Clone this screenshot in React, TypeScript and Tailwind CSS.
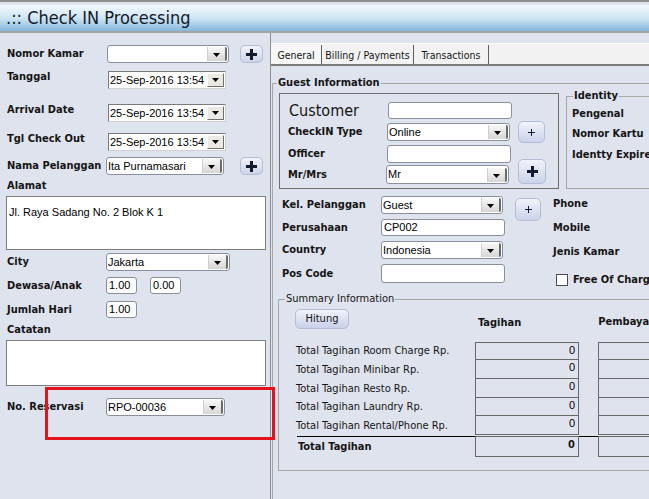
import React from "react";

const LBL = "font-bold text-[11px] leading-[14px] text-[#151515] whitespace-nowrap";
const INP = "font-['Liberation_Sans',Arial,sans-serif] text-[11px] leading-[13px] text-black whitespace-nowrap";

function Tri() {
  return (
    <svg width="7" height="4" viewBox="0 0 7 4">
      <path d="M0 0H7L3.5 4Z" fill="#000" />
    </svg>
  );
}

function Combo({ cls, value }: { cls: string; value?: string }) {
  return (
    <div className={`${cls} flex items-center bg-white border border-[#8a8f9e] rounded-[3px] pl-[1px] pr-[1px]`}>
      <span className={`${INP} flex-1 overflow-hidden`}>{value}</span>
      <div className="w-[20px] h-[14px] flex items-end justify-center pb-[4px] bg-linear-to-b from-[#f8f8f8] to-[#d6d6d6] border-l border-[#cfcfcf] border-r-2 border-r-[#6a6a6a] rounded-r-[2px]">
        <Tri />
      </div>
    </div>
  );
}

function DatePick({ cls }: { cls: string }) {
  return (
    <div className={`${cls} w-[118px] h-[18px] flex items-center bg-white border border-[#7a7a7a] border-r-[#d0d0d0] border-b-[#d0d0d0] pl-[1px] pr-[1px]`}>
      <span className={`${INP} flex-1`}>25-Sep-2016 13:54</span>
      <div className="w-[17px] h-[14px] flex items-center justify-center bg-[#ece9e4] border border-white border-r-[#707070] border-b-[#707070]">
        <Tri />
      </div>
    </div>
  );
}

function TextBox({ cls, value, right }: { cls: string; value?: string; right?: boolean }) {
  return (
    <div className={`${cls} flex items-center bg-white border border-[#8a8f9e] rounded-[3px] px-[2px] ${right ? "justify-end" : ""}`}>
      <span className={INP}>{value}</span>
    </div>
  );
}

function Plus({ cls, big }: { cls: string; big?: boolean }) {
  return (
    <div className={`${cls} flex items-center justify-center rounded-[5px] border border-[#b4bcd6] bg-linear-to-b from-[#f1f3fb] to-[#cbd3ea]`}>
      {big ? (
        <svg width="11" height="11" viewBox="0 0 11 11">
          <path d="M4 0h3v4h4v3H7v4H4V7H0V4h4z" fill="#141a30" />
        </svg>
      ) : (
        <svg width="7" height="7" viewBox="0 0 7 7">
          <path d="M3 0h1v3h3v1H4v3H3V4H0V3h3z" fill="#141a30" />
        </svg>
      )}
    </div>
  );
}

const rows = [
  { label: "Total Tagihan Room Charge Rp.", h: "h-[18px]" },
  { label: "Total Tagihan Minibar Rp.", h: "h-[19px]" },
  { label: "Total Tagihan Resto Rp.", h: "h-[19px]" },
  { label: "Total Tagihan Laundry Rp.", h: "h-[18px]" },
  { label: "Total Tagihan Rental/Phone Rp.", h: "h-[19px]" },
];

export default function App() {
  return (
    <div className="relative w-[649px] h-[499px] overflow-hidden bg-[#dfe3ee] font-['DejaVu_Sans_Condensed','DejaVu_Sans',sans-serif] text-[#151515]">
      {/* Title */}
      <div className="border-t-2 border-[#8d8d8d] pt-[3px] border-b-2 border-b-[#a4a4a4]">
        <div className="h-[26px] flex items-center pl-[6px] bg-linear-to-b from-[#f4f9fd] via-[#cfe5f3] to-[#83b8dc]">
          <span className="text-[18px] leading-[22px] text-[#141a28] whitespace-nowrap">.:: Check IN Processing</span>
        </div>
      </div>

      <div className="flex">
        {/* Left panel */}
        <div className="w-[271px] h-[466px] shrink-0 border-r border-[#8e8e8e] flex flex-col">
          <div className="flex items-center h-[18px] mt-[12px]">
            <span className={`${LBL} w-[107px] pl-[7px]`}>Nomor Kamar</span>
            <Combo cls="w-[122px] h-[18px]" />
            <Plus cls="ml-[11px] w-[23px] h-[18px]" big />
          </div>
          <div className="flex items-start h-[18px] mt-[8px]">
            <span className={`${LBL} w-[107px] pl-[7px] mt-[-1px]`}>Tanggal</span>
            <DatePick cls="ml-[1px]" />
          </div>
          <div className="flex items-start h-[18px] mt-[15px]">
            <span className={`${LBL} w-[107px] pl-[7px] mt-[-1px]`}>Arrival Date</span>
            <DatePick cls="ml-[1px]" />
          </div>
          <div className="flex items-start h-[18px] mt-[11px]">
            <span className={`${LBL} w-[107px] pl-[7px] mt-[-1px]`}>Tgl Check Out</span>
            <DatePick cls="ml-[1px]" />
          </div>
          <div className="flex items-center h-[18px] mt-[6px]">
            <span className={`${LBL} w-[106px] pl-[7px]`}>Nama Pelanggan</span>
            <Combo cls="w-[118px] h-[18px]" value="Ita Purnamasari" />
            <Plus cls="ml-[16px] w-[23px] h-[18px]" big />
          </div>
          <span className={`${LBL} pl-[7px] mt-[4px]`}>Alamat</span>
          <div className="ml-[6px] mt-[3px] w-[260px] h-[54px] bg-white border border-[#7c7c7c] px-[2px] pt-[2px]">
            <span className={INP}>Jl. Raya Sadang No. 2 Blok K 1</span>
          </div>
          <div className="flex items-center h-[18px] mt-[3px]">
            <span className={`${LBL} w-[106px] pl-[7px]`}>City</span>
            <Combo cls="w-[124px] h-[18px]" value="Jakarta" />
          </div>
          <div className="flex items-center h-[17px] mt-[6px]">
            <span className={`${LBL} w-[106px] pl-[7px]`}>Dewasa/Anak</span>
            <TextBox cls="w-[31px] h-[17px]" value="1.00" />
            <TextBox cls="ml-[13px] w-[31px] h-[17px]" value="0.00" />
          </div>
          <div className="flex items-center h-[17px] mt-[7px]">
            <span className={`${LBL} w-[106px] pl-[7px]`}>Jumlah Hari</span>
            <TextBox cls="w-[31px] h-[17px]" value="1.00" />
          </div>
          <span className={`${LBL} pl-[7px] mt-[5px]`}>Catatan</span>
          <div className="ml-[6px] mt-[3px] w-[260px] h-[46px] bg-white border border-[#7c7c7c]" />
          <div className="flex items-center h-[18px] mt-[12px]">
            <span className={`${LBL} w-[106px] pl-[7px]`}>No. Reservasi</span>
            <Combo cls="w-[119px] h-[18px]" value="RPO-00036" />
          </div>
        </div>

        {/* Right panel */}
        <div className="w-[420px] shrink-0 flex flex-col">
          <div className="mt-[10px] h-[23px] bg-[#f2f2f2] border-t border-[#fbfbfb] border-b-2 border-b-[#7d7d7d] flex items-end text-[10.5px] leading-[14px] whitespace-nowrap">
            <div className="w-[51px] h-[19px] flex items-center justify-center border-r border-[#5e5e5e] bg-[#f7f7f7]">General</div>
            <div className="w-[92px] h-[19px] flex items-center justify-center border-r border-[#5e5e5e]">Billing / Payments</div>
            <div className="w-[75px] h-[19px] flex items-center justify-center border-r border-[#5e5e5e]">Transactions</div>
          </div>

          <fieldset className="ml-[1px] mt-[10px] w-[400px] h-[430px] border border-[#a6a6a6] pl-[6px]">
            <legend className={`${LBL} -ml-[2px] px-[1px]`}>Guest Information</legend>
            <div className="flex items-start mt-[3px]">
              <div className="w-[280px] h-[96px] border border-[#6d6d6d] pl-[8px] pt-[8px] flex flex-col">
                <div className="flex items-center h-[17px]">
                  <span className="w-[100px] text-[16px] leading-[17px] whitespace-nowrap pl-[1px]">Customer</span>
                  <TextBox cls="w-[124px] h-[17px]" />
                </div>
                <div className="flex items-center h-[18px] mt-[4px]">
                  <span className={`${LBL} w-[99px]`}>CheckIN Type</span>
                  <Combo cls="w-[123px] h-[18px]" value="Online" />
                  <Plus cls="ml-[8px] w-[27px] h-[22px]" />
                </div>
                <div className="flex items-center h-[18px] mt-[4px]">
                  <span className={`${LBL} w-[99px]`}>Officer</span>
                  <TextBox cls="w-[124px] h-[18px]" />
                </div>
                <div className="flex items-center h-[19px] mt-[2px]">
                  <span className={`${LBL} w-[98px]`}>Mr/Mrs</span>
                  <Combo cls="w-[123px] h-[19px]" value="Mr" />
                  <Plus cls="ml-[9px] -mt-[6px] w-[28px] h-[25px]" big />
                </div>
              </div>
              <fieldset className="ml-[7px] -mt-[4px] w-[120px] h-[100px] border border-[#a6a6a6] pl-[5px]">
                <legend className={`${LBL} ml-[1px] px-[1px]`}>Identity</legend>
                <div className={`${LBL} mt-[4px]`}>Pengenal</div>
                <div className={`${LBL} mt-[6px]`}>Nomor Kartu</div>
                <div className={`${LBL} mt-[7px]`}>Identty Expire</div>
              </fieldset>
            </div>

            <div className="flex items-start mt-[7px] ml-[3px]">
              <div className="flex flex-col">
                <div className="flex items-center h-[18px]">
                  <span className={`${LBL} w-[99px]`}>Kel. Pelanggan</span>
                  <Combo cls="w-[122px] h-[18px]" value="Guest" />
                  <Plus cls="ml-[12px] self-start mt-[2px] w-[26px] h-[23px]" />
                </div>
                <div className="flex items-center h-[17px] mt-[5px]">
                  <span className={`${LBL} w-[99px]`}>Perusahaan</span>
                  <TextBox cls="w-[124px] h-[17px]" value="CP002" />
                </div>
                <div className="flex items-center h-[18px] mt-[5px]">
                  <span className={`${LBL} w-[99px]`}>Country</span>
                  <Combo cls="w-[122px] h-[18px]" value="Indonesia" />
                </div>
                <div className="flex items-center h-[19px] mt-[5px]">
                  <span className={`${LBL} w-[99px]`}>Pos Code</span>
                  <TextBox cls="w-[124px] h-[19px]" />
                </div>
              </div>
              <div className="ml-[12px] flex flex-col">
                <div className={`${LBL} mt-[1px]`}>Phone</div>
                <div className={`${LBL} mt-[10px]`}>Mobile</div>
                <div className={`${LBL} mt-[10px]`}>Jenis Kamar</div>
                <div className="flex items-center h-[14px] mt-[14px]">
                  <div className="ml-[3px] w-[12px] h-[12px] bg-white border border-[#4c4c4c]" />
                  <span className={`${LBL} ml-[5px]`}>Free Of Charg</span>
                </div>
              </div>
            </div>

            <fieldset className="-ml-[1px] mt-[5px] w-[400px] h-[179px] border border-[#a6a6a6] pl-[6px]">
              <legend className="text-[11px] leading-[14px] px-[1px] whitespace-nowrap">Summary Information</legend>
              <div className="pl-[10px] flex flex-col">
                <div className="flex items-start mt-[3px]">
                  <div className="w-[54px] h-[20px] flex items-center justify-center rounded-[5px] border border-[#b4bcd6] bg-linear-to-b from-[#f1f3fb] to-[#c9d1e9] text-[11px]">Hitung</div>
                  <span className={`${LBL} ml-[129px] mt-[7px]`}>Tagihan</span>
                  <span className={`${LBL} ml-[77px] mt-[6px]`}>Pembaya</span>
                </div>
                <div className="flex flex-col mt-[12px]">
                  {rows.map((r, i) => (
                    <div key={r.label} className={`flex ${r.h}`}>
                      <span className="w-[180px] pl-[1px] text-[11px] leading-[14px] whitespace-nowrap self-center">{r.label}</span>
                      <div className={`w-[104px] ${r.h} border-x border-b border-[#686868] ${i === 0 ? "border-t" : ""} flex justify-end pr-[3px]`}>
                        <span className={`${INP} leading-[15px]`}>0</span>
                      </div>
                      <div className="w-[19px]" />
                      <div className={`w-[104px] ${r.h} border-x border-b border-[#686868] ${i === 0 ? "border-t" : ""}`} />
                    </div>
                  ))}
                  <div className="flex mt-[1px] ml-[2px] h-[21px]">
                    <div className="w-[178px] border-t border-black pl-[1px] flex items-center">
                      <span className={LBL}>Total Tagihan</span>
                    </div>
                    <div className="w-[104px] border border-[#686868] flex justify-end pr-[3px]">
                      <span className={`${LBL} leading-[15px]`}>0</span>
                    </div>
                    <div className="w-[19px] border-t border-black" />
                    <div className="w-[104px] border border-[#686868]" />
                  </div>
                </div>
              </div>
            </fieldset>
          </fieldset>
        </div>
      </div>

      <div className="absolute left-[45px] top-[387px] w-[230px] h-[53px] border-[3px] border-[#e3121b]" />
    </div>
  );
}
